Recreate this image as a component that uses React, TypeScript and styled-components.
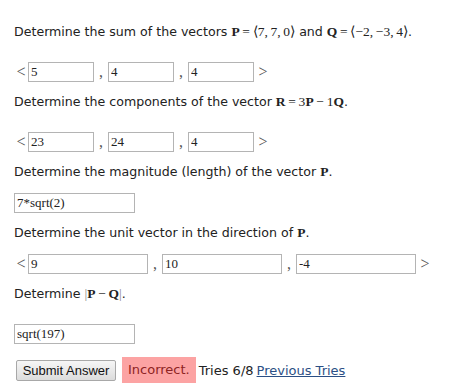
import styled, { createGlobalStyle } from 'styled-components';

const GlobalStyle = createGlobalStyle`
  body {
    margin: 0;
    background: #ffffff;
    font-family: "DejaVu Sans", Verdana, sans-serif;
    font-size: 13px;
    color: #222222;
  }
`;

const Page = styled.div`
  display: flex;
  flex-direction: column;
  gap: 12px;
  padding: 24px 0 0 14px;
`;

const Question = styled.div<{ $gap: number }>`
  display: flex;
  flex-direction: column;
  gap: ${(p) => p.$gap}px;
`;

const Prompt = styled.div`
  font-size: 12.6px;
  line-height: 16px;
  height: 16px;
  white-space: nowrap;
`;

const Math = styled.span`
  font-family: "Liberation Serif", "Times New Roman", serif;
  font-size: 13.5px;
`;

const Bold = styled.b`
  font-weight: bold;
`;

const Bar = styled.span`
  color: #8a8a8a;
`;

const AnswerRow = styled.div`
  display: flex;
  align-items: center;
  height: 20px;
`;

const Bracket = styled.span<{ $w: number }>`
  font-family: "Liberation Serif", "Times New Roman", serif;
  font-size: 16px;
  color: #555555;
  width: ${(p) => p.$w}px;
  text-align: center;
  line-height: 20px;
`;

const Field = styled.input<{ $w: number }>`
  box-sizing: border-box;
  width: ${(p) => p.$w}px;
  height: 20px;
  margin: 0;
  padding: 0 2px;
  border: 1px solid #b4b4b4;
  font-family: "Liberation Serif", "Times New Roman", serif;
  font-size: 13px;
  color: #222222;
  background: #ffffff;
  outline: none;
`;

const Footer = styled.div`
  display: flex;
  align-items: center;
  margin-top: 1px;
  white-space: nowrap;
`;

const SubmitButton = styled.button`
  box-sizing: border-box;
  margin-left: 2px;
  width: 100px;
  height: 21px;
  padding: 0;
  border: 1px solid #a8a8a8;
  border-radius: 2px;
  background: linear-gradient(#f6f6f6, #dcdcdc);
  font-family: "Liberation Sans", Arial, sans-serif;
  font-size: 13px;
  color: #111111;
`;

const Badge = styled.span`
  margin-left: 6px;
  height: 26px;
  line-height: 26px;
  padding: 0 6px;
  background: #fca3a3;
  color: #8e2424;
`;

const Tries = styled.span`
  margin-left: 3px;
`;

const Link = styled.a`
  margin-left: 3px;
  color: #2b4f85;
  text-decoration: underline;
`;

type VecProps = { values: string[]; width: number };

const VectorAnswer = ({ values, width }: VecProps) => (
  <AnswerRow>
    <Bracket $w={14}>&lt;</Bracket>
    {values.map((v, i) => (
      <span key={i} style={{ display: 'contents' }}>
        {i > 0 && <Bracket $w={14}>,</Bracket>}
        <Field $w={width} defaultValue={v} />
      </span>
    ))}
    <Bracket $w={18}>&gt;</Bracket>
  </AnswerRow>
);

export default function App() {
  return (
    <>
      <GlobalStyle />
      <Page>
        <Question $gap={22}>
          <Prompt>
            Determine the sum of the vectors{' '}
            <Math>
              <Bold>P</Bold>&thinsp;=&thinsp;⟨7,&thinsp;7,&thinsp;0⟩
            </Math>{' '}
            and{' '}
            <Math>
              <Bold>Q</Bold>&thinsp;=&thinsp;⟨−2,&thinsp;−3,&thinsp;4⟩
            </Math>
            .
          </Prompt>
          <VectorAnswer values={['5', '4', '4']} width={66} />
        </Question>
        <Question $gap={22}>
          <Prompt>
            Determine the components of the vector{' '}
            <Math>
              <Bold>R</Bold>&thinsp;=&thinsp;3<Bold>P</Bold>&thinsp;−&thinsp;1<Bold>Q</Bold>
            </Math>
            .
          </Prompt>
          <VectorAnswer values={['23', '24', '4']} width={66} />
        </Question>
        <Question $gap={13}>
          <Prompt>
            Determine the magnitude (length) of the vector{' '}
            <Math>
              <Bold>P</Bold>
            </Math>
            .
          </Prompt>
          <AnswerRow>
            <Field $w={121} defaultValue="7*sqrt(2)" />
          </AnswerRow>
        </Question>
        <Question $gap={13}>
          <Prompt>
            Determine the unit vector in the direction of{' '}
            <Math>
              <Bold>P</Bold>
            </Math>
            .
          </Prompt>
          <VectorAnswer values={['9', '10', '-4']} width={120} />
        </Question>
        <Question $gap={22}>
          <Prompt>
            Determine{' '}
            <Math>
              <Bar>|</Bar>
              <Bold>P</Bold>&thinsp;−&thinsp;<Bold>Q</Bold>
              <Bar>|</Bar>
            </Math>
            .
          </Prompt>
          <AnswerRow>
            <Field $w={121} defaultValue="sqrt(197)" />
          </AnswerRow>
        </Question>
        <Footer>
          <SubmitButton>Submit Answer</SubmitButton>
          <Badge>Incorrect.</Badge>
          <Tries>Tries 6/8</Tries>
          <Link href="#">Previous Tries</Link>
        </Footer>
      </Page>
    </>
  );
}
